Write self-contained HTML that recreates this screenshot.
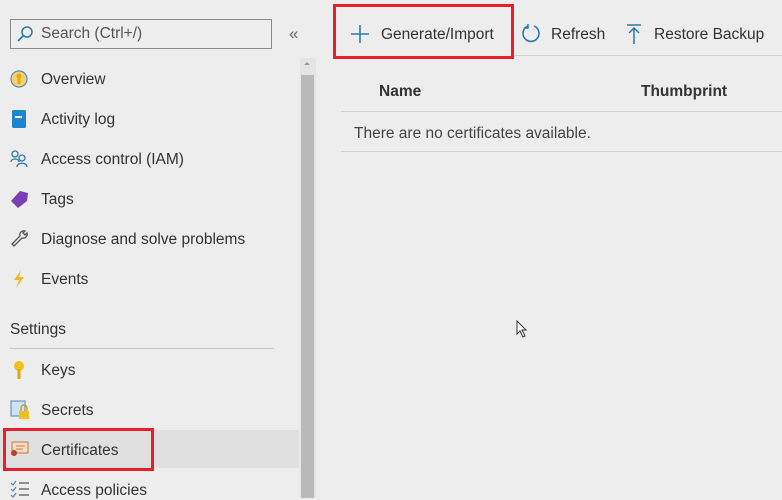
<!DOCTYPE html><html><head><style>
body{margin:0;width:782px;height:498px;background:#ededed;font-family:"Liberation Sans",sans-serif;color:#333;position:relative;overflow:hidden;font-size:15.5px}
.a{position:absolute;white-space:nowrap}
.it{position:absolute;left:41px;font-size:15.5px;color:#333}
.ic{position:absolute;left:10px}
</style></head><body>
<div class="a" style="left:10px;top:19px;width:260px;height:28px;border:1px solid #8a8a8a;background:#eeeeee"></div>
<svg class="a" style="left:16px;top:25px" width="18" height="18" viewBox="0 0 18 18"><circle cx="11" cy="7" r="5" fill="none" stroke="#2a7ab0" stroke-width="1.5"/><path d="M7.5 10.5 L2 16" stroke="#2a7ab0" stroke-width="1.6"/></svg>
<div class="a" style="left:41px;top:25px;color:#555">Search (Ctrl+/)</div>
<div class="a" style="left:289px;top:24px;color:#666;font-size:17px">«</div>
<div class="a" style="left:300px;top:58px;width:16px;height:440px;background:#e4e4e4"></div>
<div class="a" style="left:301px;top:75px;width:13px;height:423px;background:#b9b9b9"></div>
<div class="a" style="left:304px;top:62px;width:0;height:0;border-left:3px solid transparent;border-right:3px solid transparent;border-bottom:3px solid #999"></div>

<svg class="ic" style="top:70px" width="18" height="18"><circle cx="9" cy="9" r="8" fill="#f3d36b" stroke="#5c8ab8" stroke-width="1.2"/><rect x="7.5" y="7" width="3" height="7" fill="#e7a914"/><circle cx="9" cy="6" r="2.5" fill="#e7a914"/></svg>
<div class="it" style="top:71px">Overview</div>
<svg class="ic" style="top:109px" width="18" height="20"><rect x="2" y="1" width="14" height="18" rx="1.5" fill="#1e84d0"/><rect x="5" y="7" width="7" height="2" fill="#fff"/></svg>
<div class="it" style="top:111px">Activity log</div>
<svg class="ic" style="top:149px" width="20" height="20"><circle cx="5" cy="5" r="3" fill="none" stroke="#2a7ab0" stroke-width="1.3"/><path d="M1 13c0-4 8-4 8 0" fill="none" stroke="#2a7ab0" stroke-width="1.3"/><circle cx="12" cy="9" r="3" fill="none" stroke="#2a7ab0" stroke-width="1.3"/><path d="M7 18c0-5 10-5 10 0" fill="none" stroke="#2a7ab0" stroke-width="1.3"/></svg>
<div class="it" style="top:151px">Access control (IAM)</div>
<svg class="ic" style="top:189px" width="20" height="20"><path d="M10 2 L18 4 L17 12 L8 19 L1 12 Z" fill="#7b3fb5"/></svg>
<div class="it" style="top:191px">Tags</div>
<svg class="ic" style="top:229px" width="20" height="20"><path d="M15 2a4 4 0 0 0-5 5L2 15l2 2 8-8a4 4 0 0 0 5-5l-2 2-2-2z" fill="none" stroke="#555" stroke-width="1.3"/></svg>
<div class="it" style="top:231px">Diagnose and solve problems</div>
<svg class="ic" style="top:269px" width="18" height="20"><path d="M11 1 L4 11 L9 11 L6 19 L14 8 L9 8 Z" fill="#f2b620"/></svg>
<div class="it" style="top:271px">Events</div>
<div class="a" style="left:10px;top:321px;color:#333">Settings</div>
<div class="a" style="left:10px;top:348px;width:264px;height:1px;background:#c8c8c8"></div>
<svg class="ic" style="top:360px" width="18" height="20"><circle cx="9" cy="6" r="5" fill="#f2c01e"/><rect x="7.5" y="9" width="3" height="10" fill="#e0a810"/></svg>
<div class="it" style="top:362px">Keys</div>
<svg class="ic" style="top:400px" width="20" height="20"><rect x="1" y="1" width="14" height="15" fill="#cfe2f3" stroke="#4a8ac4"/><rect x="9" y="11" width="10" height="8" fill="#f2c01e"/><path d="M11 11v-3a3 3 0 0 1 6 0v3" fill="none" stroke="#c9a010" stroke-width="1.4"/></svg>
<div class="it" style="top:402px">Secrets</div>
<div class="a" style="left:0;top:430px;width:299px;height:38px;background:#e0e0e0"></div>
<svg class="ic" style="top:440px" width="20" height="20"><rect x="2" y="2" width="16" height="11" fill="#f4dcc8" stroke="#c87a40"/><path d="M6 6h9M6 9h7" stroke="#c87a40"/><circle cx="4" cy="13" r="3" fill="#c0392b"/></svg>
<div class="it" style="top:442px">Certificates</div>
<div class="a" style="left:3px;top:428px;width:145px;height:37px;border:3px solid #e81f2a"></div>
<svg class="ic" style="top:479px" width="20" height="20"><path d="M1 4l2 2 3-4M1 10l2 2 3-4M1 16l2 2 3-4" fill="none" stroke="#5b7fc7" stroke-width="1.2"/><path d="M9 4h10M9 10h10M9 16h10" stroke="#555" stroke-width="1.3"/></svg>
<div class="it" style="top:482px">Access policies</div>

<div class="a" style="left:515px;top:55px;width:267px;height:1px;background:#d0d0d0"></div>
<svg class="a" style="left:350px;top:24px" width="20" height="20"><path d="M10 1v18M1 10h18" stroke="#2a7ab0" stroke-width="1.6"/></svg>
<div class="a" style="left:381px;top:26px">Generate/Import</div>
<div class="a" style="left:333px;top:4px;width:175px;height:49px;border:3px solid #e81f2a"></div>
<svg class="a" style="left:520px;top:23px" width="22" height="22"><path d="M8 3A8 8 0 1 0 14 3" fill="none" stroke="#2a7ab0" stroke-width="1.6"/><path d="M8 1v4h-4" fill="none" stroke="#2a7ab0" stroke-width="1.5"/></svg>
<div class="a" style="left:551px;top:26px">Refresh</div>
<svg class="a" style="left:625px;top:23px" width="18" height="22"><path d="M2 2h14M9 5v16M4 10l5-5 5 5" fill="none" stroke="#2a7ab0" stroke-width="1.5"/></svg>
<div class="a" style="left:654px;top:26px">Restore Backup</div>
<div class="a" style="left:379px;top:83px;font-weight:bold;color:#333">Name</div>
<div class="a" style="left:641px;top:83px;font-weight:bold;color:#333">Thumbprint</div>
<div class="a" style="left:341px;top:111px;width:441px;height:1px;background:#d0d0d0"></div>
<div class="a" style="left:354px;top:125px;color:#444">There are no certificates available.</div>
<div class="a" style="left:341px;top:151px;width:441px;height:1px;background:#d0d0d0"></div>
<svg class="a" style="left:516px;top:320px" width="14" height="18"><path d="M1 1v13l3-3 3 6 2-1-3-6h4z" fill="#fff" stroke="#333"/></svg>
</body></html>
